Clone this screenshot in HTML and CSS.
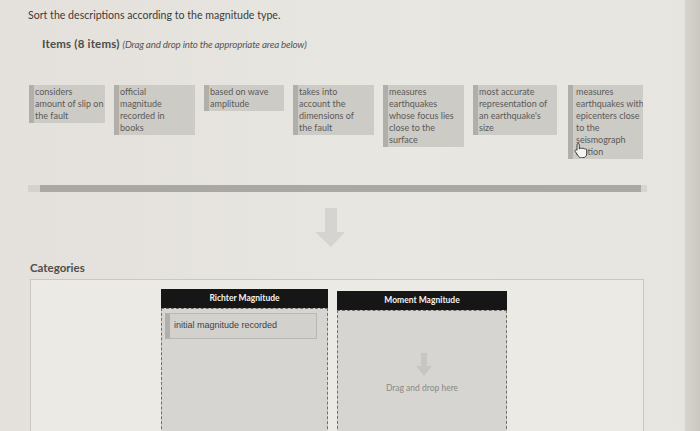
FILE: index.html
```html
<!DOCTYPE html>
<html lang="en">
<head>
	<meta charset="UTF-8">
	<title>Sort by magnitude type</title>
	<link rel="stylesheet" href="styles.css">
</head>
<body>
	<div class="screen">
		<div class="page">
			<p class="prompt">Sort the descriptions according to the magnitude type.</p>
			<div class="items-head"><b>Items (8 items)</b> <i>(Drag and drop into the appropriate area below)</i></div>

			<!-- items still waiting to be sorted -->
			<ul class="pool">
				<li class="card">considers<br>amount of slip on<br>the fault</li>
				<li class="card">official<br>magnitude<br>recorded in<br>books</li>
				<li class="card">based on wave<br>amplitude</li>
				<li class="card">takes into<br>account the<br>dimensions of<br>the fault</li>
				<li class="card">measures<br>earthquakes<br>whose focus lies<br>close to the<br>surface</li>
				<li class="card">most accurate<br>representation of<br>an earthquake's<br>size</li>
				<li class="card card-held">measures<br>earthquakes with<br>epicenters close<br>to the<br>seismograph<br>station
					<svg class="cursor" width="14" height="16" viewBox="0 0 14 16">
						<path d="M4 1.5c.8 0 1.3.5 1.3 1.3V7l.4-.1c.2-.6.7-.9 1.2-.9.6 0 1 .3 1.2.8.3-.4.7-.6 1.2-.6.6 0 1 .4 1.2.9.3-.2.6-.3.9-.3.8 0 1.3.6 1.3 1.4v3.6c0 2.3-1.6 3.9-3.9 3.9H7.3c-1.3 0-2.3-.6-3-1.6L1.3 9.6c-.4-.6-.3-1.3.3-1.7.5-.3 1.1-.2 1.5.3l-.1-.1V2.8c0-.8.5-1.3 1-1.3z" fill="#f4f4f2" stroke="#3a3a3a" stroke-width="1"/>
					</svg>
				</li>
			</ul>

			<div class="track"></div>
			<div class="drop-arrow"></div>

			<h2 class="cat-title">Categories</h2>
			<div class="categories">
				<div class="bucket bucket-richter">
					<div class="bucket-head">Richter Magnitude</div>
					<div class="bucket-body">
						<div class="placed">initial magnitude recorded</div>
					</div>
				</div>
				<div class="bucket bucket-moment">
					<div class="bucket-head">Moment Magnitude</div>
					<div class="bucket-body empty">
						<div class="hint-arrow"></div>
						<div class="hint">Drag and drop here</div>
					</div>
				</div>
			</div>
		</div>
	</div>
</body>
</html>
```

FILE: styles.css
```css
/*css reset*/
html,body,div,ul,li,p,h2{
	padding: 0;
	margin: 0;
}
ul{list-style-type: none;}
body{
	background: #cdcac4;
	font: 11px/16px "Lato", "Open Sans", sans-serif;
	color: #4a4947;
	overflow: hidden;
}

/*page*/
.screen{
	width: 700px;
	height: 431px;
	background: linear-gradient(to right, #e6e4df 0, #e6e4df 684px, #d6d3cd 686px, #cbc8c2 700px);
}
.page{
	width: 684px;
	padding-top: 7px;
	background: linear-gradient(to right, #e4e0db, #e8e7e2 60%, #e6e5e0);
	height: 424px;
}
.prompt{
	margin-left: 28px;
	font-size: 10.6px;
	color: #3c3b39;
}
.items-head{
	margin: 13px 0 0 42px;
	font-size: 11.5px;
	color: #4d4c49;
}
.items-head b{letter-spacing: .2px;}
.items-head i{
	font-size: 9.8px;
	letter-spacing: -.2px;
	color: #555;
}

/*cards waiting to be sorted*/
.pool{
	display: flex;
	align-items: flex-start;
	gap: 9px;
	margin: 33px 0 0 29px;
	height: 74px;
}
.card{
	position: relative;
	width: 71px;
	padding: 1px 0 1px 1px;
	background: #cdcbc6;
	border-left: 5px solid #b1afaa;
	font-size: 9px;
	line-height: 12px;
	color: #5b5a57;
	white-space: nowrap;
	overflow: hidden;
}
.card:nth-child(1){width: 70px;}
.card:nth-child(2){width: 75px;}
.card:nth-child(3){width: 74px;}
.card:nth-child(4){width: 75px;}
.card:nth-child(5){width: 75px;}
.card:nth-child(6){width: 78px;}
.card:nth-child(7){
	width: 67px;
	margin-left: 2px;
	padding-left: 3px;
}
.card-held{
	overflow: visible;
	clip-path: inset(0 0 0 -5px);
}
.cursor{
	position: absolute;
	left: 1px;
	top: 57px;
}

.track{
	margin: 26px 0 0 28px;
	width: 601px;
	height: 7px;
	background: #a9a8a2;
	border-left: 12px solid #d3d2cd;
	border-right: 6px solid #d6d5d0;
}
.drop-arrow{
	margin: 16px 0 0 315px;
	width: 30px;
	height: 39px;
	background: #d5d4d0;
	clip-path: polygon(10px 0, 22px 0, 22px 24px, 30px 24px, 16px 39px, 0 24px, 10px 24px);
}

/*categories*/
.cat-title{
	margin: 13px 0 0 30px;
	font-size: 11.5px;
	font-weight: 700;
	color: #4f4e4b;
}
.categories{
	display: flex;
	justify-content: center;
	gap: 9px;
	margin: 3px 0 0 30px;
	width: 614px;
	height: 160px;
	padding-top: 9px;
	padding-right: 6px;
	background: #ebeae5;
	border: 1px solid #c9c7c2;
	border-bottom: 0;
	box-sizing: border-box;
}
.bucket{
	display: flex;
	flex-direction: column;
}
.bucket-richter{width: 167px;}
.bucket-moment{width: 170px; margin-top: 2px;}
.bucket-head{
	height: 19px;
	line-height: 19px;
	background: #171616;
	color: #f2f2f2;
	text-align: center;
	font-size: 8.5px;
	font-weight: 700;
}
.bucket-body{
	flex: 1;
	padding: 4px 10px 0 3px;
	background: #d6d5d1;
	border: 1px dashed #6f6e6b;
	border-bottom: 0;
}
.placed{
	height: 26px;
	line-height: 22px;
	padding-left: 4px;
	background: #d2d1cd;
	border: 1px solid #b9b8b3;
	border-left: 5px solid #b0afaa;
	box-sizing: border-box;
	font: 9px/22px "Liberation Sans", Arial, sans-serif;
	color: #424240;
}
.bucket-body.empty{
	display: flex;
	flex-direction: column;
	align-items: center;
	padding: 42px 0 0;
}
.hint-arrow{
	width: 16px;
	height: 23px;
	margin-left: 4px;
	background: #c7c6c2;
	clip-path: polygon(5px 0, 11px 0, 11px 13px, 16px 13px, 8px 23px, 0 13px, 5px 13px);
}
.hint{
	margin-top: 4px;
	font-size: 8.5px;
	color: #8a8986;
}
```
